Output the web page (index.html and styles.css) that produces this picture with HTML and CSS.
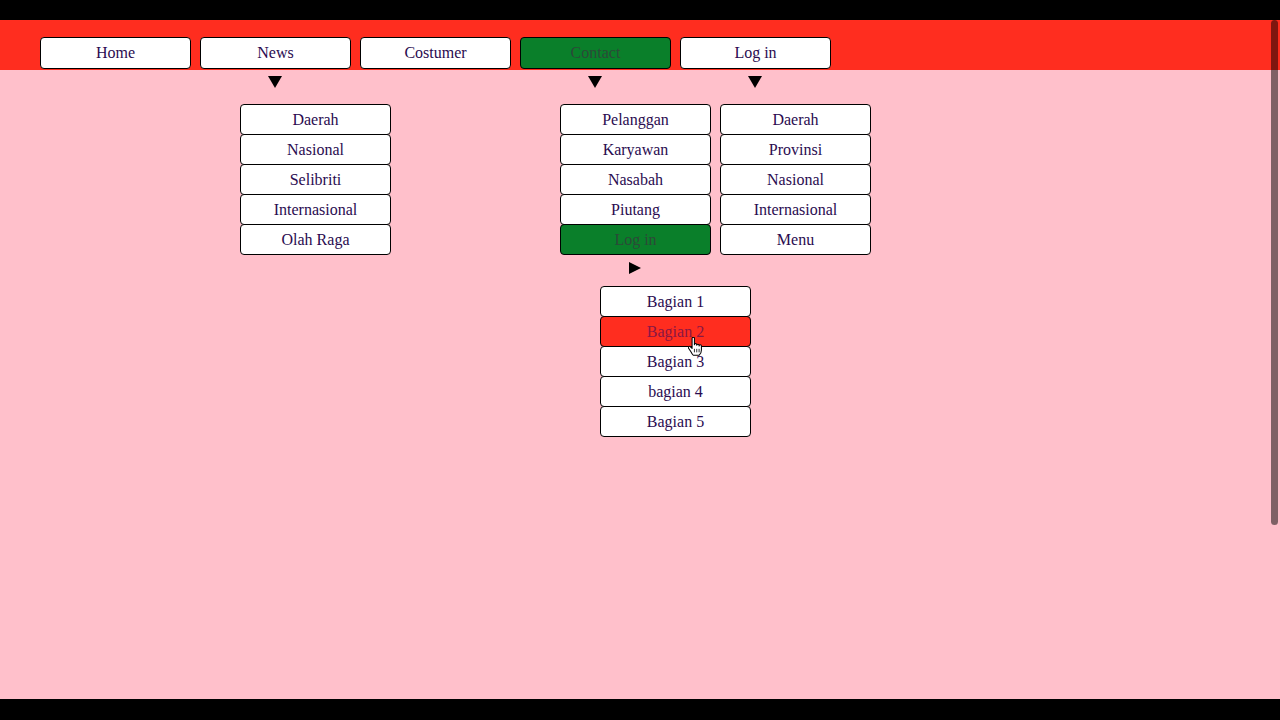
FILE: index.html
```html
<!DOCTYPE html>
<html lang="id">
<head>
<meta charset="utf-8">
<title>Menu</title>
<link rel="stylesheet" href="styles.css">
</head>
<body>
<div class="letterbox top"></div>
<div class="page">
  <nav class="nav">
    <ul class="menu">
      <li class="item"><a class="btn">Home</a></li>
      <li class="item"><a class="btn">News</a>
        <span class="arrow-down"></span>
        <ul class="drop">
          <li><a class="btn">Daerah</a></li>
          <li><a class="btn">Nasional</a></li>
          <li><a class="btn">Selibriti</a></li>
          <li><a class="btn">Internasional</a></li>
          <li><a class="btn">Olah Raga</a></li>
        </ul>
      </li>
      <li class="item"><a class="btn">Costumer</a></li>
      <li class="item"><a class="btn active">Contact</a>
        <span class="arrow-down"></span>
        <ul class="drop">
          <li><a class="btn">Pelanggan</a></li>
          <li><a class="btn">Karyawan</a></li>
          <li><a class="btn">Nasabah</a></li>
          <li><a class="btn">Piutang</a></li>
          <li class="sub"><a class="btn active">Log in</a>
            <span class="arrow-right"></span>
            <ul class="drop subdrop">
              <li><a class="btn">Bagian 1</a></li>
              <li><a class="btn hover">Bagian 2</a></li>
              <li><a class="btn">Bagian 3</a></li>
              <li><a class="btn">bagian 4</a></li>
              <li><a class="btn">Bagian 5</a></li>
            </ul>
          </li>
        </ul>
      </li>
      <li class="item"><a class="btn">Log in</a>
        <span class="arrow-down"></span>
        <ul class="drop">
          <li><a class="btn">Daerah</a></li>
          <li><a class="btn">Provinsi</a></li>
          <li><a class="btn">Nasional</a></li>
          <li><a class="btn">Internasional</a></li>
          <li><a class="btn">Menu</a></li>
        </ul>
      </li>
    </ul>
  </nav>
  <div class="scroll-thumb"></div>
  <svg class="cursor" width="14" height="19" viewBox="0 0 12 16">
    <path d="M3.5 1 a1 1 0 0 1 2 0 v5.5 a1 1 0 0 1 2 0 v0.5 a1 1 0 0 1 2 0 v0.5 a1 1 0 0 1 2 0 v3.5 q0 3 -2 4.5 h-5 q-1 -1 -2 -3 l-2 -3 a1 1 0 0 1 1.6 -1.2 l1.4 1.4 z" fill="#fff" stroke="#000" stroke-width="0.9" stroke-linejoin="round"/>
    <path d="M5.5 10 v3 M7.5 10 v3 M9.5 10 v3" stroke="#000" stroke-width="0.7"/>
  </svg>
</div>
<div class="letterbox bottom"></div>
</body>
</html>
```

FILE: styles.css
```css
html, body {
  margin: 0;
  padding: 0;
  height: 720px;
  overflow: hidden;
  background: #000;
}

body,
.btn {
  font-family: "Liberation Serif", "Times New Roman", Tinos, "DejaVu Serif", serif;
  font-size: 16px;
}

.letterbox {
  background: #000;
}

.letterbox.top {
  height: 20px;
}

.letterbox.bottom {
  height: 21px;
}

.page {
  position: relative;
  height: 679px;
  background: #ffc0cb;
}

.nav {
  height: 50px;
  background: #ff2d1f;
  box-sizing: border-box;
  padding: 17px 0 0 40px;
}

ul {
  list-style: none;
  margin: 0;
  padding: 0;
}

.menu {
  display: flex;
  gap: 9px;
}

.item,
.drop li {
  position: relative;
}

.btn {
  display: block;
  width: 149px;
  height: 29px;
  line-height: 29px;
  text-align: center;
  background: #fff;
  border: 1px solid #000;
  border-radius: 4px;
  color: #2a0b50;
}

.menu > .item > .btn {
  height: 30px;
  line-height: 30px;
}

.btn.active {
  background: #0a7f2a;
  color: #2c4a38;
}

.btn.hover {
  background: #ff2d1f;
  color: #8a1744;
}

.arrow-down {
  position: absolute;
  top: 39px;
  left: 68px;
  width: 0;
  height: 0;
  border-left: 7px solid transparent;
  border-right: 7px solid transparent;
  border-top: 12px solid #000;
}

.arrow-right {
  position: absolute;
  top: 38px;
  left: 69px;
  width: 0;
  height: 0;
  border-top: 6.5px solid transparent;
  border-bottom: 6.5px solid transparent;
  border-left: 12px solid #000;
}

.drop {
  position: absolute;
  top: 67px;
  left: 40px;
}

.drop li + li {
  margin-top: -1px;
}

.subdrop {
  top: 62px;
}

.scroll-thumb {
  position: absolute;
  top: 0;
  right: 2px;
  width: 7px;
  height: 505px;
  border-radius: 4px;
  background: rgba(0, 0, 0, 0.5);
}

.cursor {
  position: absolute;
  left: 688px;
  top: 317px;
}
```
